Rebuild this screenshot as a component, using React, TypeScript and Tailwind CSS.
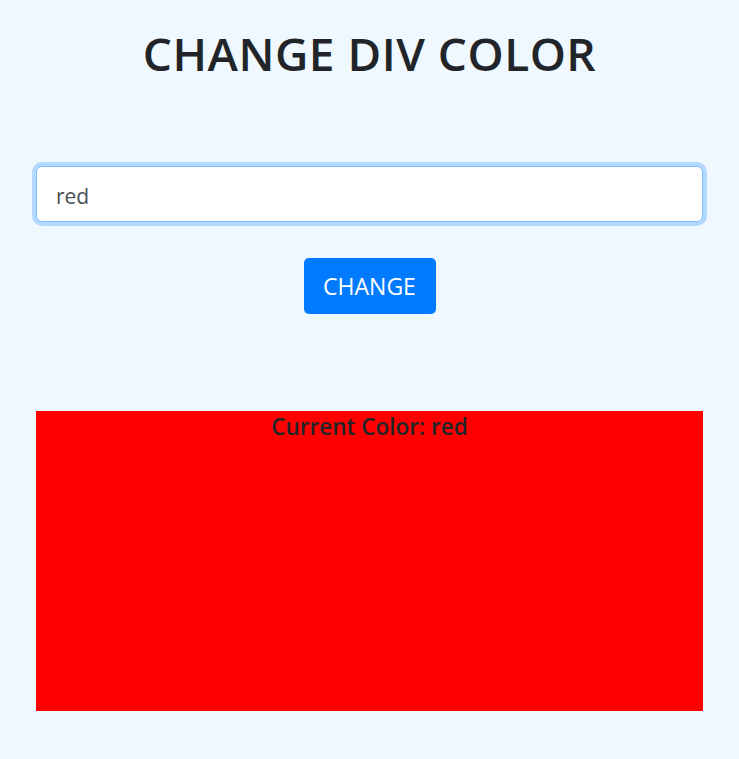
import React, { useState } from "react";

export default function App() {
  const [value, setValue] = useState("red");
  const [color, setColor] = useState("red");
  return (
    <div className="min-h-[759px] bg-[#f0f8ff] px-[36px] pt-[26px] text-[#212529]" style={{ fontFamily: '"Open Sans", "Noto Sans", sans-serif' }}>
      <h1 className="text-center text-[46px] font-semibold leading-[1.2] tracking-[0.5px]">CHANGE DIV COLOR</h1>
      <div className="mt-[85px]">
        <input
          value={value}
          onChange={(e) => setValue(e.target.value)}
          autoFocus
          className="block h-[56px] w-full rounded-[6px] border border-[#80bdff] bg-white px-[19px] pt-[3px] text-[21px] text-[#495057] shadow-[0_0_0_4px_rgba(0,123,255,0.25)] outline-none"
        />
      </div>
      <div className="mt-[36px] flex justify-center">
        <button
          onClick={() => setColor(value)}
          className="h-[56px] w-[132px] rounded-[5px] bg-[#007bff] text-[23px] text-white"
        >
          CHANGE
        </button>
      </div>
      <div className="mt-[97px] h-[300px] w-full text-center" style={{ backgroundColor: color }}>
        <p className="text-[22.5px] font-semibold leading-[1.4]">Current Color: {color}</p>
      </div>
    </div>
  );
}
